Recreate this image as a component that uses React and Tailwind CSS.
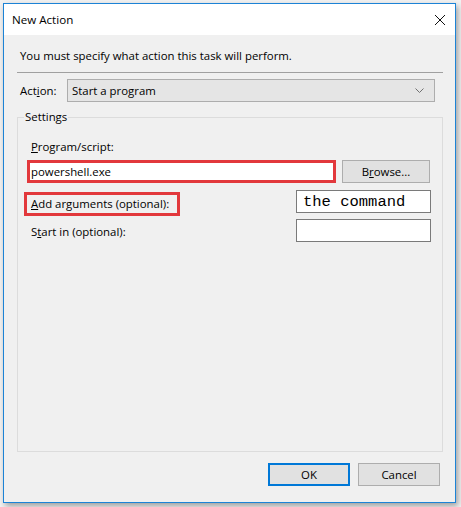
import React from "react";

const font = { fontFamily: '"Open Sans", "Noto Sans", sans-serif' };

export default function App() {
  return (
    <div
      className="w-[461px] h-[507px] bg-[#f2f2f2] pt-[3px] pl-[3px] text-[11.4px] text-black overflow-hidden"
      style={font}
    >
      <div className="w-[453px] h-[500px] border border-[#1c83d6] bg-[#f0f0f0] flex flex-col shadow-[2px_3px_6px_rgba(0,0,0,0.35)]">
        {/* title bar */}
        <div className="h-[31px] bg-white flex items-center pl-[8px] pr-[9px] shrink-0">
          <span className="text-[11.6px] leading-[16px]">New Action</span>
          <svg className="ml-auto" width="12" height="12" viewBox="0 0 12 12">
            <path d="M1 1 L11 11 M11 1 L1 11" stroke="#111" strokeWidth="1" fill="none" />
          </svg>
        </div>

        {/* body */}
        <div className="flex flex-col">
          <div className="mt-[13px] ml-[16px] leading-[16px]">
            You must specify what action this task will perform.
          </div>
          <div className="mt-[8px] ml-[13px] w-[426px] h-[1px] bg-[#a0a0a0]" />

          <div className="mt-[6px] flex items-center">
            <span className="ml-[16px] w-[47px] leading-[16px]">
              Act<span className="underline">i</span>on:
            </span>
            <div className="w-[368px] h-[23px] border border-[#adadad] bg-[#e5e5e5] flex items-center pl-[4px] pr-[10px]">
              <span className="leading-[16px]">Start a program</span>
              <svg className="ml-auto" width="9" height="5" viewBox="0 0 9 5">
                <path d="M0.5 0.5 L4.5 4.5 L8.5 0.5" stroke="#707070" strokeWidth="1" fill="none" />
              </svg>
            </div>
          </div>

          <fieldset className="mt-[7px] ml-[13px] w-[426px] h-[343px] border border-[#dcdcdc]">
            <legend className="ml-[6px] px-[1px] leading-[16px]">Settings</legend>

            <div className="mt-[14px] ml-[13px] leading-[16px]">
              <span className="underline">P</span>rogram/script:
            </div>

            <div className="mt-[5px] flex items-start">
              <div className="ml-[9px] w-[309px] h-[23px] border-[3px] border-[#e2383c] bg-white flex items-center pl-[1px] leading-[16px]">
                powershell.exe
              </div>
              <div className="ml-[6px] w-[88px] h-[23px] border border-[#adadad] bg-[#e1e1e1] flex items-center justify-center leading-[16px]">
                B<span className="underline">r</span>owse...
              </div>
            </div>

            <div className="mt-[7px] flex items-start">
              <div className="mt-[2px] ml-[6px] w-[156px] h-[24px] border-[3px] border-[#e2383c] flex items-center pl-[4px] leading-[16px]">
                <span className="underline">A</span>dd arguments (optional):
              </div>
              <div
                className="ml-[116px] w-[135px] h-[23px] border border-[#7a7a7a] bg-white flex items-center pl-[6px] text-[15.5px] leading-[18px]"
                style={{ fontFamily: '"Liberation Mono", "DejaVu Sans Mono", monospace' }}
              >
                the command
              </div>
            </div>

            <div className="mt-[3px] flex items-center">
              <div className="ml-[13px] w-[265px] leading-[16px] pt-[2px]">
                S<span className="underline">t</span>art in (optional):
              </div>
              <div className="w-[135px] h-[23px] border border-[#7a7a7a] bg-white" />
            </div>
          </fieldset>

          <div className="mt-[11px] flex justify-end pr-[15px] gap-[8px]">
            <div className="w-[82px] h-[23px] border-2 border-[#0078d7] bg-[#e1e1e1] flex items-center justify-center leading-[16px]">
              OK
            </div>
            <div className="w-[82px] h-[23px] border border-[#adadad] bg-[#e1e1e1] flex items-center justify-center leading-[16px]">
              Cancel
            </div>
          </div>
        </div>
      </div>
    </div>
  );
}
